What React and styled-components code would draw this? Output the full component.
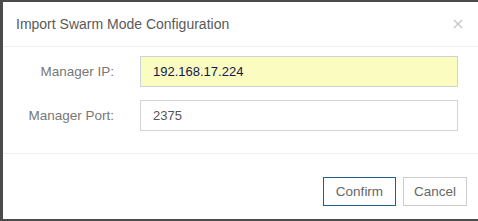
import styled, { createGlobalStyle } from "styled-components"

const GlobalStyle = createGlobalStyle`
    html, body {
        margin: 0;
        padding: 0;
        background: #4b4b4b;
        overflow: hidden;
        font-family: "Liberation Sans", Arial, sans-serif;
    }
`

const Modal = styled.div`
    width: 480px;
    height: 217px;
    margin: 2px 0 0 3px;
    background: #ffffff;
    display: flex;
    flex-direction: column;
`

const Header = styled.div`
    height: 45px;
    box-sizing: border-box;
    padding: 0 20px 0 13px;
    display: flex;
    align-items: center;
    justify-content: space-between;
    border-bottom: 1px solid #eeeeee;
`

const Title = styled.h4`
    margin: 0;
    font-size: 14px;
    font-weight: 400;
    color: #5a5a5a;
`

const Close = styled.button`
    border: none;
    background: none;
    padding: 0;
    width: 10px;
    height: 10px;
    display: flex;
    cursor: pointer;
`

const Body = styled.div`
    padding: 9px 25px 22px 0;
    display: flex;
    flex-direction: column;
    gap: 13px;
    border-bottom: 1px solid #eeeeee;
`

const Row = styled.div`
    display: flex;
    align-items: center;
`

const Label = styled.label`
    width: 111px;
    text-align: right;
    font-size: 13.5px;
    color: #777777;
`

const Input = styled.input`
    margin-left: 26px;
    flex: 1;
    height: 31px;
    box-sizing: border-box;
    border: 1px solid ${(props) => props.highlight ? "#cfd2da" : "#d3d5dc"};
    background: ${(props) => props.highlight ? "#fafcc0" : "#ffffff"};
    color: ${(props) => props.highlight ? "#15174f" : "#555555"};
    font-family: "Liberation Sans", Arial, sans-serif;
    font-size: 13px;
    padding: 0 12px;
    outline: none;
`

const Footer = styled.div`
    flex: 1;
    padding: 23px 16px 0 0;
    display: flex;
    justify-content: flex-end;
    align-items: flex-start;
    gap: 7px;
`

const Button = styled.button`
    height: 29px;
    width: ${(props) => props.primary ? "73px" : "64px"};
    padding: 0;
    background: #ffffff;
    border: 1px solid ${(props) => props.primary ? "#215d8a" : "#cccccc"};
    color: #666666;
    font-family: "Liberation Sans", Arial, sans-serif;
    font-size: 13.5px;
    cursor: pointer;
`

export default () => {
    return (
        <>
        <GlobalStyle />
        <Modal>
            <Header>
                <Title>Import Swarm Mode Configuration</Title>
                <Close aria-label="close">
                    <svg width="10" height="10" viewBox="0 0 10 10">
                        <path d="M1 1 L9 9 M9 1 L1 9" stroke="#c8c8c8" strokeWidth="1.4" />
                    </svg>
                </Close>
            </Header>
            <Body>
                <Row>
                    <Label>Manager IP:</Label>
                    <Input highlight defaultValue="192.168.17.224" />
                </Row>
                <Row>
                    <Label>Manager Port:</Label>
                    <Input defaultValue="2375" />
                </Row>
            </Body>
            <Footer>
                <Button primary>Confirm</Button>
                <Button>Cancel</Button>
            </Footer>
        </Modal>
        </>
    )
}
